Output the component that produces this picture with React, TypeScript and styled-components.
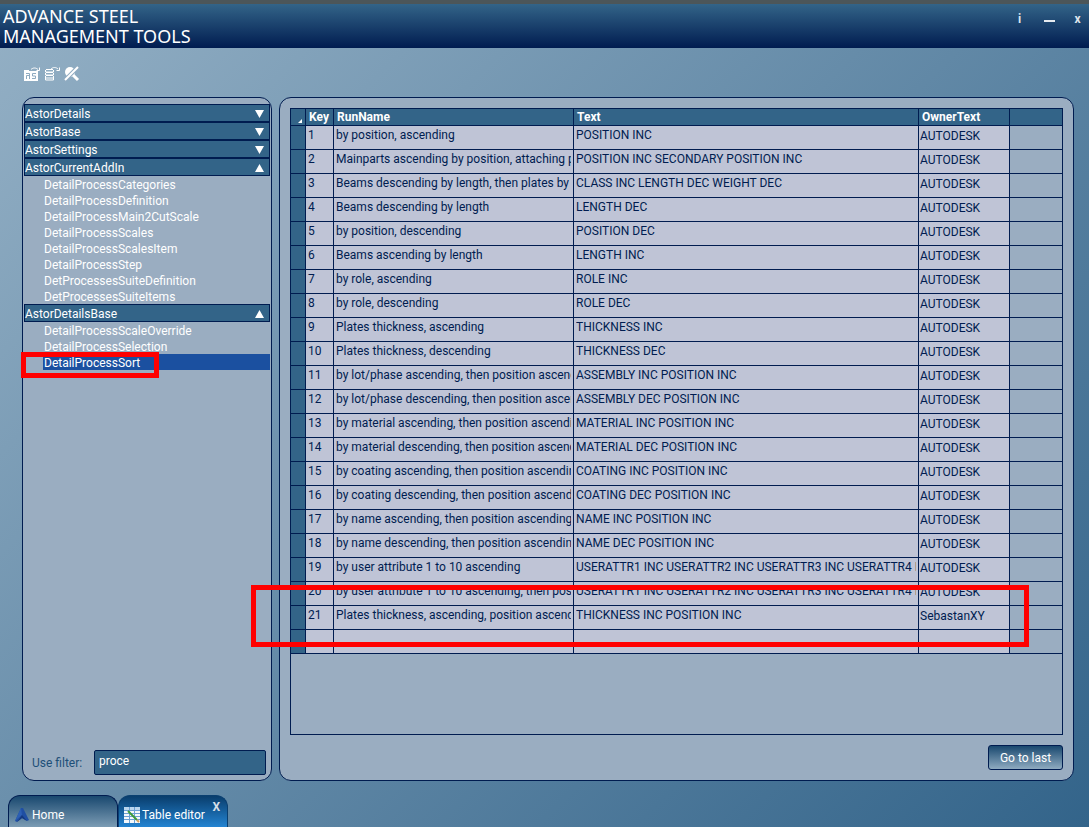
import React from "react";
import styled, { createGlobalStyle } from "styled-components";

const navy = "#001c50";
const steel = "#336488";
const panel = "#9aadc1";

const Global = createGlobalStyle`
  *, *::before, *::after { box-sizing: border-box; }
  html, body, #root { height: 100%; }
  body {
    margin: 0;
    overflow: hidden;
    font-family: Roboto, "Open Sans", sans-serif;
    font-size: 12px;
    line-height: 16px;
    color: #fff;
  }
  button, input { font: inherit; color: inherit; }
`;

const Shell = styled.div`
  height: 100vh;
  display: flex;
  flex-direction: column;
  background: linear-gradient(135deg, #94b0c5 0%, #33648a 100%);
`;

const TitleBar = styled.header`
  flex: none;
  height: 48px;
  display: flex;
  justify-content: space-between;
  border-top: 4px solid #4c5659;
  padding: 2px 1px 0 3px;
  background: linear-gradient(#336488, #001c50);
`;

const Title = styled.h1`
  margin: 0;
  font-family: "Noto Sans", sans-serif;
  font-size: 18px;
  line-height: 20px;
  font-weight: 400;
`;

const WindowButtons = styled.div`
  display: flex;
  gap: 8px;
`;

const WindowButton = styled.button`
  width: 21px;
  height: 26px;
  padding: 0;
  border: 0;
  background: none;
  color: #dde4ec;
  font-weight: 700;
`;

const Toolbar = styled.nav`
  flex: none;
  display: flex;
  gap: 2px;
  padding: 17px 0 14px 23px;
`;

const ToolButton = styled.button`
  display: flex;
  width: 18px;
  height: 18px;
  padding: 0;
  border: 0;
  background: none;
`;

const Workspace = styled.main`
  flex: 1;
  min-height: 0;
  display: flex;
  gap: 7px;
  padding: 0 15px 0 22px;
`;

const Sidebar = styled.aside`
  flex: none;
  width: 250px;
  display: flex;
  flex-direction: column;
  justify-content: space-between;
  border: 1px solid ${navy};
  border-radius: 12px;
  background: ${panel};
  padding: 6px 1px 5px;
`;

const GroupHeader = styled.button`
  width: 100%;
  height: 18px;
  display: flex;
  align-items: center;
  justify-content: space-between;
  padding: 1px 5px 0 0;
  border: 1px solid ${navy};
  background: ${steel};
`;

const TreeItems = styled.ul`
  margin: 0;
  padding: 0 0 0 19px;
  list-style: none;
`;

const TreeItem = styled.li<{ $selected?: boolean }>`
  position: relative;
  height: 16px;
  padding: 1px 0 0 1px;
  background: ${(p) => (p.$selected ? "#1b50a0" : "transparent")};
`;

const Highlight = styled.span<{ $area: "item" | "rows" }>`
  position: absolute;
  z-index: 2;
  border: 5px solid #f00;
  pointer-events: none;
  ${(p) =>
    p.$area === "item"
      ? "left: -22px; top: -2px; width: 138px; height: 26px;"
      : "left: -40px; right: 33px; bottom: 7px; height: 62px;"}
`;

const FilterRow = styled.div`
  display: flex;
  align-items: center;
  justify-content: space-between;
  padding: 0 4px 0 8px;
`;

const FilterLabel = styled.label`
  color: #1d4f78;
`;

const FilterInput = styled.input`
  width: 172px;
  height: 25px;
  padding: 0 4px 3px;
  border: 1px solid ${navy};
  border-radius: 2px;
  background: ${steel};
  outline: none;
`;

const Content = styled.section`
  flex: 1;
  min-width: 0;
  display: flex;
  flex-direction: column;
  align-items: flex-end;
  gap: 10px;
  border: 1px solid ${navy};
  border-radius: 12px;
  background: ${panel};
  padding: 10px;
`;

const GridFrame = styled.div`
  flex: 1;
  width: 100%;
  min-height: 0;
  border: 1px solid ${navy};
`;

const TableWrap = styled.div`
  position: relative;
`;

const Table = styled.table`
  width: 100%;
  table-layout: fixed;
  border-collapse: separate;
  border-spacing: 0;
  color: ${navy};
`;

const Th = styled.th`
  height: 17px;
  padding: 1px 3px 0;
  border-right: 1px solid ${navy};
  border-bottom: 1px solid ${navy};
  background: ${steel};
  color: #fff;
  line-height: 15px;
  text-align: left;
  vertical-align: top;
  &:last-child { border-right: 0; }
  svg { display: block; }
`;

const Td = styled.td<{ $kind?: "head" | "empty" | "owner" }>`
  height: 24px;
  padding: ${(p) => (p.$kind === "owner" ? "2px 0 0 1px" : "1px 2px 0 2px")};
  border-right: 1px solid ${navy};
  border-bottom: 1px solid ${navy};
  background: ${(p) => (p.$kind === "head" ? steel : p.$kind === "empty" ? "transparent" : "#bfc4d6")};
  vertical-align: top;
  &:last-child { border-right: 0; }
`;

const Clip = styled.div`
  overflow: hidden;
  white-space: nowrap;
`;

const GoButton = styled.button`
  width: 75px;
  height: 25px;
  padding: 0;
  border: 1px solid ${navy};
  border-radius: 3px;
  background: linear-gradient(#19486f, #8fabc0);
`;

const Tabs = styled.footer`
  flex: none;
  display: flex;
  padding: 14px 0 0 8px;
`;

const Tab = styled.div<{ $active?: boolean }>`
  width: 110px;
  height: 32px;
  display: flex;
  align-items: flex-start;
  border: 1px solid ${(p) => (p.$active ? "#0a3f70" : navy)};
  border-bottom: 0;
  border-radius: 12px 12px 0 0;
  background: ${(p) => (p.$active ? "linear-gradient(#093d6c, #2484d2)" : "linear-gradient(#19486f, #7c9cb4)")};
`;

const TabButton = styled.button`
  display: flex;
  align-items: center;
  gap: 2px;
  padding: 11px 0 0 5px;
  border: 0;
  background: none;
  white-space: nowrap;
`;

const TabClose = styled.button`
  margin-left: auto;
  padding: 3px 7px 0 0;
  border: 0;
  background: none;
  color: #d6dfe8;
  font-weight: 700;
`;

const Arrow = ({ up }: { up?: boolean }) => (
  <svg width="9" height="8" viewBox="0 0 9 8" aria-hidden="true">
    <path d={up ? "M4.5 0L9 8H0z" : "M0 0H9L4.5 8z"} fill="#fff" />
  </svg>
);

const groups: { name: string; items: string[] }[] = [
  { name: "AstorDetails", items: [] },
  { name: "AstorBase", items: [] },
  { name: "AstorSettings", items: [] },
  {
    name: "AstorCurrentAddIn",
    items: [
      "DetailProcessCategories",
      "DetailProcessDefinition",
      "DetailProcessMain2CutScale",
      "DetailProcessScales",
      "DetailProcessScalesItem",
      "DetailProcessStep",
      "DetProcessesSuiteDefinition",
      "DetProcessesSuiteItems",
    ],
  },
  {
    name: "AstorDetailsBase",
    items: ["DetailProcessScaleOverride", "DetailProcessSelection", "DetailProcessSort"],
  },
];

const attrs = "USERATTR1 INC USERATTR2 INC USERATTR3 INC USERATTR4 INC";

const rows: [string, string, string?][] = [
  ["by position, ascending", "POSITION INC"],
  ["Mainparts ascending by position, attaching parts", "POSITION INC SECONDARY POSITION INC"],
  ["Beams descending by length, then plates by weight", "CLASS INC LENGTH DEC WEIGHT DEC"],
  ["Beams descending by length", "LENGTH DEC"],
  ["by position, descending", "POSITION DEC"],
  ["Beams ascending by length", "LENGTH INC"],
  ["by role, ascending", "ROLE INC"],
  ["by role, descending", "ROLE DEC"],
  ["Plates thickness, ascending", "THICKNESS INC"],
  ["Plates thickness, descending", "THICKNESS DEC"],
  ["by lot/phase ascending, then position ascending", "ASSEMBLY INC POSITION INC"],
  ["by lot/phase descending, then position ascending", "ASSEMBLY DEC POSITION INC"],
  ["by material ascending, then position ascending", "MATERIAL INC POSITION INC"],
  ["by material descending, then position ascending", "MATERIAL DEC POSITION INC"],
  ["by coating ascending, then position ascending", "COATING INC POSITION INC"],
  ["by coating descending, then position ascending", "COATING DEC POSITION INC"],
  ["by name ascending, then position ascending", "NAME INC POSITION INC"],
  ["by name descending, then position ascending", "NAME DEC POSITION INC"],
  ["by user attribute 1 to 10 ascending", attrs],
  ["by user attribute 1 to 10 ascending, then position", attrs],
  ["Plates thickness, ascending, position ascending", "THICKNESS INC POSITION INC", "SebastanXY"],
];

export default function App() {
  return (
    <Shell>
      <Global />
      <TitleBar>
        <Title>
          ADVANCE STEEL
          <br />
          MANAGEMENT TOOLS
        </Title>
        <WindowButtons>
          <WindowButton aria-label="Info">i</WindowButton>
          <WindowButton aria-label="Minimize">
            <svg width="12" height="12" viewBox="0 0 12 12">
              <path d="M1 9h11v2H1z" fill="#e6ebf0" />
            </svg>
          </WindowButton>
          <WindowButton aria-label="Close">x</WindowButton>
        </WindowButtons>
      </TitleBar>
      <Toolbar>
        <ToolButton aria-label="Load from Advance Steel">
          <svg width="18" height="18" viewBox="0 0 18 18" fill="none" stroke="#fff">
            <path d="M1 6V5h5v1h9v10H1z" fill="#fff" stroke="none" />
            <path d="M3 8.500h3.500V14M3.500 14v-3.500h3M13 8.500H9.500v2.500h3v2.500H9" stroke="#8fabc1" />
            <path d="M8 4.500c2-2 5-2 7 0M16.500 2.500v3h-3" />
          </svg>
        </ToolButton>
        <ToolButton aria-label="Load from database">
          <svg width="18" height="18" viewBox="0 0 18 18" fill="none" stroke="#fff">
            <path d="M3 4.500h7M2.500 5v2h8V5M3 7.500h7M2.500 8v2h8V8M3 10.500h7M2.500 11v2h8v-2M2.500 13v2h8v-2" />
            <path d="M8 4c2-2 5-2 7 0M16.500 2.500v3h-3" />
          </svg>
        </ToolButton>
        <ToolButton aria-label="Disconnect">
          <svg width="18" height="18" viewBox="0 0 18 18">
            <circle cx="7" cy="7" r="5" fill="#fff" />
            <path d="M9 9l6 6" stroke="#fff" strokeWidth="3" />
            <path d="M1 16L15 2" stroke="#8fabc1" strokeWidth="4" />
            <path d="M2 15L15 2" stroke="#fff" strokeWidth="2" />
          </svg>
        </ToolButton>
      </Toolbar>
      <Workspace>
        <Sidebar>
          <div>
            {groups.map((g) => (
              <div key={g.name}>
                <GroupHeader aria-expanded={g.items.length > 0}>
                  {g.name}
                  <Arrow up={g.items.length > 0} />
                </GroupHeader>
                {g.items.length > 0 && (
                  <TreeItems>
                    {g.items.map((item) => (
                      <TreeItem key={item} $selected={item === "DetailProcessSort"}>
                        {item}
                        {item === "DetailProcessSort" && <Highlight $area="item" />}
                      </TreeItem>
                    ))}
                  </TreeItems>
                )}
              </div>
            ))}
          </div>
          <FilterRow>
            <FilterLabel htmlFor="filter">Use filter:</FilterLabel>
            <FilterInput id="filter" defaultValue="proce" />
          </FilterRow>
        </Sidebar>
        <Content>
          <GridFrame>
            <TableWrap>
              <Table>
                <colgroup>
                  <col width="15" />
                  <col width="28" />
                  <col width="240" />
                  <col />
                  <col width="91" />
                  <col width="52" />
                </colgroup>
                <thead>
                  <tr>
                    <Th>
                      <svg width="9" height="13" viewBox="0 0 9 13" aria-hidden="true">
                        <path d="M8 9v4H4z" fill="#fff" />
                      </svg>
                    </Th>
                    <Th>Key</Th>
                    <Th>RunName</Th>
                    <Th>Text</Th>
                    <Th>OwnerText</Th>
                    <Th />
                  </tr>
                </thead>
                <tbody>
                  {rows.map(([name, text, owner], i) => (
                    <tr key={i}>
                      <Td $kind="head" />
                      <Td>{i + 1}</Td>
                      <Td><Clip>{name}</Clip></Td>
                      <Td><Clip>{text}</Clip></Td>
                      <Td $kind="owner">{owner ?? "AUTODESK"}</Td>
                      <Td $kind="empty" />
                    </tr>
                  ))}
                  <tr>
                    <Td $kind="head" />
                    <Td />
                    <Td />
                    <Td />
                    <Td />
                    <Td $kind="empty" />
                  </tr>
                </tbody>
              </Table>
              <Highlight $area="rows" />
            </TableWrap>
          </GridFrame>
          <GoButton>Go to last</GoButton>
        </Content>
      </Workspace>
      <Tabs>
        <Tab>
          <TabButton>
            <svg width="16" height="16" viewBox="0 0 16 16">
              <path d="M7 1h2l6 12-2 1-5-3-5 4-2-1z" fill="#1f4fa3" />
              <path d="M7 1l1 7-7 6z" fill="#2c5fb4" />
              <path d="M8 8l5 6-5-3-5 4z" fill="#153a80" />
            </svg>
            Home
          </TabButton>
        </Tab>
        <Tab $active>
          <TabButton>
            <svg width="16" height="16" viewBox="0 0 16 16">
              <path d="M0 0h16v16H0z" fill="#f4f8fc" />
              <path d="M0 0h16v3H0z" fill="#b9d5ee" />
              <path d="M0 3.500h16M0 6.500h16M0 9.500h16M0 12.500h16M5.500 0v16M10.500 0v16" stroke="#6da0d4" />
              <path d="M4 4l9 9" stroke="#3c9a3c" strokeWidth="2" />
              <path d="M13 13l2 2" stroke="#d8a05c" strokeWidth="2" />
            </svg>
            Table editor
          </TabButton>
          <TabClose aria-label="Close tab">X</TabClose>
        </Tab>
      </Tabs>
    </Shell>
  );
}
